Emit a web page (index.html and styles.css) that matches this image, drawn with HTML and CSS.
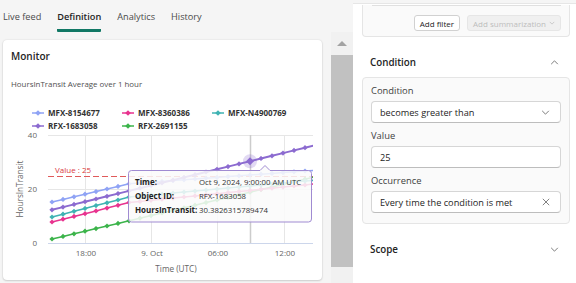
FILE: index.html
```html
<!DOCTYPE html>
<html lang="en">
<head>
    <meta charset="UTF-8">
    <title>Monitor definition</title>
    <link rel="stylesheet" href="styles.css">
</head>
<body>

<div class="app">
    <!-- Left: tabs and chart -->
    <div class="left">
        <nav class="tabs">
            <span class="tab">Live feed</span>
            <span class="tab active">Definition</span>
            <span class="tab">Analytics</span>
            <span class="tab">History</span>
        </nav>

        <section class="card">
            <h3 class="card-title">Monitor</h3>
            <p class="subtitle">HoursInTransit Average over 1 hour</p>

            <div class="legend">
                <span class="legend-item"><svg class="legend-mark" viewBox="0 0 12 6"><line x1="0" y1="3" x2="12" y2="3" stroke="#8fa3f5" stroke-width="1.5"/><path d="M6 0.2 L8.8 3 L6 5.8 L3.2 3Z" fill="#8fa3f5"/></svg>MFX-8154677</span>
                <span class="legend-item"><svg class="legend-mark" viewBox="0 0 12 6"><line x1="0" y1="3" x2="12" y2="3" stroke="#e8338f" stroke-width="1.5"/><path d="M6 0.2 L8.8 3 L6 5.8 L3.2 3Z" fill="#e8338f"/></svg>MFX-8360386</span>
                <span class="legend-item"><svg class="legend-mark" viewBox="0 0 12 6"><line x1="0" y1="3" x2="12" y2="3" stroke="#3fb3b3" stroke-width="1.5"/><path d="M6 0.2 L8.8 3 L6 5.8 L3.2 3Z" fill="#3fb3b3"/></svg>MFX-N4900769</span>
                <span class="legend-item"><svg class="legend-mark" viewBox="0 0 12 6"><line x1="0" y1="3" x2="12" y2="3" stroke="#8c6bd0" stroke-width="1.5"/><path d="M6 0.2 L8.8 3 L6 5.8 L3.2 3Z" fill="#8c6bd0"/></svg>RFX-1683058</span>
                <span class="legend-item"><svg class="legend-mark" viewBox="0 0 12 6"><line x1="0" y1="3" x2="12" y2="3" stroke="#3cb44b" stroke-width="1.5"/><path d="M6 0.2 L8.8 3 L6 5.8 L3.2 3Z" fill="#3cb44b"/></svg>RFX-2691155</span>
            </div>

            <svg class="chart" width="319" height="152" viewBox="3 128 319 152">
                <defs>
                    <clipPath id="plot"><rect x="48" y="128" width="265" height="118"/></clipPath>
                    <marker id="m-blue" viewBox="-3 -3 6 6" markerWidth="6" markerHeight="6" markerUnits="userSpaceOnUse"><path d="M0 -2.6 L2.6 0 L0 2.6 L-2.6 0Z" fill="#8fa3f5"/></marker>
                    <marker id="m-pink" viewBox="-3 -3 6 6" markerWidth="6" markerHeight="6" markerUnits="userSpaceOnUse"><path d="M0 -2.6 L2.6 0 L0 2.6 L-2.6 0Z" fill="#e8338f"/></marker>
                    <marker id="m-teal" viewBox="-3 -3 6 6" markerWidth="6" markerHeight="6" markerUnits="userSpaceOnUse"><path d="M0 -2.6 L2.6 0 L0 2.6 L-2.6 0Z" fill="#3fb3b3"/></marker>
                    <marker id="m-purple" viewBox="-3 -3 6 6" markerWidth="6" markerHeight="6" markerUnits="userSpaceOnUse"><path d="M0 -2.6 L2.6 0 L0 2.6 L-2.6 0Z" fill="#8c6bd0"/></marker>
                    <marker id="m-green" viewBox="-3 -3 6 6" markerWidth="6" markerHeight="6" markerUnits="userSpaceOnUse"><path d="M0 -2.6 L2.6 0 L0 2.6 L-2.6 0Z" fill="#3cb44b"/></marker>
                </defs>

                <!-- grid -->
                <g class="grid">
                    <line x1="48" y1="135.5" x2="313" y2="135.5"/>
                    <line x1="48" y1="189.5" x2="313" y2="189.5"/>
                    <line x1="85.5" y1="135" x2="85.5" y2="243"/>
                    <line x1="151.5" y1="135" x2="151.5" y2="243"/>
                    <line x1="217.5" y1="135" x2="217.5" y2="243"/>
                    <line x1="284.5" y1="135" x2="284.5" y2="243"/>
                </g>
                <line class="crosshair" x1="250.5" y1="135" x2="250.5" y2="243"/>
                <line class="axis" x1="48" y1="243.5" x2="313" y2="243.5"/>

                <!-- threshold -->
                <line class="threshold" x1="48" y1="176.5" x2="313" y2="176.5"/>
                <text class="threshold-label" x="55" y="173">Value : 25</text>

                <!-- series -->
                <g clip-path="url(#plot)" fill="none" stroke-width="1.5">
                    <polyline stroke="#3cb44b" marker-start="url(#m-green)" marker-mid="url(#m-green)" marker-end="url(#m-green)"
                        points="52,239 63,236.4 74,233.8 85,231.2 96,228.6 107,226 118,223.4 129,220.8 140,218.2 151,215.6 162,213 173,210.4 184,207.8 195,205.2 206,202.6 217,200 228,197.4 239,194.8 250,192.2 261,189.6 272,187 283,184.4 294,181.8 305,179.2 316,176.6"/>
                    <polyline stroke="#e8338f" marker-start="url(#m-pink)" marker-mid="url(#m-pink)" marker-end="url(#m-pink)"
                        points="52,222 63,219.2 74,216.4 85,213.7 96,210.9 107,208.1 118,205.3 129,202.5 140,201.4 151,200.3 162,199.2 173,198.1 184,197 195,195.9 206,194.8 217,193.7 228,192.6 239,191.5 250,190.4 261,189.3 272,188.2 283,187.1 294,186 305,184.9 316,183.8"/>
                    <polyline stroke="#3fb3b3" marker-start="url(#m-teal)" marker-mid="url(#m-teal)" marker-end="url(#m-teal)"
                        points="52,217 63,214.2 74,211.3 85,208.5 96,205.6 107,202.8 118,200 129,197.1 140,196.1 151,195.1 162,194.1 173,193.1 184,192.1 195,191.1 206,190.1 217,189.1 228,188.1 239,187.1 250,186.1 261,185.1 272,184.1 283,183.1 294,182.1 305,181.1 316,180.1"/>
                    <polyline stroke="#8fa3f5" marker-start="url(#m-blue)" marker-mid="url(#m-blue)" marker-end="url(#m-blue)"
                        points="52,202 63,199.4 74,196.8 85,194.2 96,191.6 107,189 118,186.4 129,183.8 140,183 151,182.2 162,181.4 173,180.6 184,179.8 195,179 206,178.2 217,177.4 228,176.6 239,175.8 250,175 261,174.2 272,173.4 283,172.6 294,171.8 305,171 316,170.2"/>
                    <polyline stroke="#8c6bd0" stroke-width="2" marker-start="url(#m-purple)" marker-mid="url(#m-purple)" marker-end="url(#m-purple)"
                        points="52,209.8 63,207.1 74,204.4 85,201.7 96,199 107,196.3 118,193.6 129,190.9 140,188.2 151,185.5 162,182.8 173,180.1 184,177.4 195,174.7 206,172 217,169.3 228,166.6 239,163.9 250,161.2 261,158.5 272,155.8 283,153.1 294,150.4 305,147.7 316,145"/>
                </g>
                <circle class="halo" cx="250" cy="161.2" r="7"/>
                <path d="M250 157.2 L254 161.2 L250 165.2 L246 161.2Z" fill="#8c6bd0"/>

                <!-- axis labels -->
                <g class="tick">
                    <text x="37" y="138" text-anchor="end">40</text>
                    <text x="37" y="192" text-anchor="end">20</text>
                    <text x="37" y="246" text-anchor="end">0</text>
                    <text x="86" y="256" text-anchor="middle">18:00</text>
                    <text x="152" y="256" text-anchor="middle">9. Oct</text>
                    <text x="218" y="256" text-anchor="middle">06:00</text>
                    <text x="285" y="256" text-anchor="middle">12:00</text>
                </g>
                <text class="axis-title" x="176" y="272" text-anchor="middle">Time (UTC)</text>
                <text class="axis-title" x="0" y="0" text-anchor="middle" transform="translate(23 189) rotate(-90)">HoursInTransit</text>

                <!-- tooltip -->
                <path class="tooltip" d="M131.5 170.5 H260 L265 165.5 L270 170.5 H308.5 A3 3 0 0 1 311.5 173.5 V219 A3 3 0 0 1 308.5 222 H131.5 A3 3 0 0 1 128.5 219 V173.5 A3 3 0 0 1 131.5 170.5Z"/>
                <g class="tip-text">
                    <text class="tip-key" x="135" y="185">Time:</text>
                    <text x="199" y="185">Oct 9, 2024, 9:00:00 AM UTC</text>
                    <text class="tip-key" x="135" y="199">Object ID:</text>
                    <text x="199" y="199">RFX-1683058</text>
                    <text class="tip-key" x="135" y="213">HoursInTransit:</text>
                    <text x="199" y="213">30.3826315789474</text>
                </g>
            </svg>
        </section>
    </div>

    <!-- Scrollbar -->
    <div class="scrollbar">
        <div class="scroll-arrow"></div>
        <div class="scroll-thumb"></div>
    </div>

    <!-- Right: settings -->
    <aside class="right">
        <div class="filter-card">
            <div class="divider"></div>
            <div class="filter-actions">
                <button class="btn">Add filter</button>
                <button class="btn" disabled>Add summarization <svg class="chev-sm" viewBox="0 0 8 5"><polyline points="1,1 4,4 7,1"/></svg></button>
            </div>
        </div>

        <div class="section-head">
            <span>Condition</span>
            <svg class="chev" viewBox="0 0 10 6"><polyline points="1,5 5,1 9,5"/></svg>
        </div>

        <div class="cond-card">
            <label class="field-label">Condition</label>
            <div class="field">
                <span>becomes greater than</span>
                <svg class="chev" viewBox="0 0 10 6"><polyline points="1,1 5,5 9,1"/></svg>
            </div>
            <label class="field-label">Value</label>
            <div class="field"><span>25</span></div>
            <label class="field-label">Occurrence</label>
            <div class="field">
                <span>Every time the condition is met</span>
                <svg class="close" viewBox="0 0 10 10"><path d="M1 1 L9 9 M9 1 L1 9"/></svg>
            </div>
        </div>

        <div class="section-head">
            <span>Scope</span>
            <svg class="chev" viewBox="0 0 10 6"><polyline points="1,1 5,5 9,1"/></svg>
        </div>

        <div class="section-head">
            <span>Action</span>
            <svg class="chev" viewBox="0 0 10 6"><polyline points="1,5 5,1 9,5"/></svg>
        </div>
    </aside>
</div>

</body>
</html>
```

FILE: styles.css
```css
* {
    margin: 0;
    padding: 0;
    box-sizing: border-box;
}

body {
    font-family: 'Open Sans', 'Noto Sans', sans-serif;
    background-color: #f5f5f5;
    color: #242424;
}

.app {
    display: flex;
    width: 576px;
    height: 283px;
    overflow: hidden;
}

/* Left column */
.left {
    width: 331px;
    flex-shrink: 0;
}

.tabs {
    display: flex;
    gap: 16px;
    height: 38px;
    padding: 10px 0 0 3px;
}

.tab {
    font-size: 9.2px;
    line-height: 14px;
    color: #4a4a4a;
    padding-bottom: 5px;
    border-bottom: 3px solid transparent;
    height: 22px;
}

.tab.active {
    font-weight: 600;
    color: #242424;
    border-bottom-color: #117865;
    border-radius: 1px;
}

.card {
    margin: 2px 0 0 3px;
    width: 319px;
    height: 240px;
    background-color: #fff;
    border-radius: 4px;
    box-shadow: 0 0 2px rgba(0, 0, 0, 0.12), 0 1px 2px rgba(0, 0, 0, 0.14);
    overflow: hidden;
}

.card-title {
    font-size: 10px;
    font-weight: 600;
    line-height: 14px;
    padding: 9px 0 0 8px;
    color: #242424;
}

.subtitle {
    font-size: 7.9px;
    line-height: 12px;
    color: #505050;
    margin: 15px 0 0 8px;
}

.legend {
    display: grid;
    grid-template-columns: repeat(3, 90px);
    margin-top: 16px;
    padding-left: 29px;
}

.legend-item {
    display: flex;
    align-items: center;
    gap: 4px;
    font-size: 8px;
    font-weight: 700;
    line-height: 13px;
    color: #333;
}

.legend-mark {
    width: 12px;
    height: 6px;
}

.chart {
    display: block;
    margin-top: -4px;
}

.grid line {
    stroke: #e6e6e6;
    stroke-width: 1;
}

.crosshair {
    stroke: #cccccc;
    stroke-width: 1.5;
}

.axis {
    stroke: #ccd6eb;
    stroke-width: 1;
}

.threshold {
    stroke: #e05a5a;
    stroke-width: 1;
    stroke-dasharray: 6 3;
}

.threshold-label {
    font-size: 8px;
    fill: #d9383c;
}

.halo {
    fill: #8c6bd0;
    fill-opacity: 0.25;
}

.tick text {
    font-size: 8px;
    fill: #666;
}

.axis-title {
    font-size: 8.2px;
    fill: #666;
}

.tooltip {
    fill: rgba(250, 250, 250, 0.86);
    stroke: #a08bd2;
    stroke-width: 1;
}

.tip-text text {
    font-size: 7.8px;
    fill: #333;
}

.tip-text .tip-key {
    font-size: 8px;
    font-weight: 700;
    fill: #222;
}

/* Scrollbar */
.scrollbar {
    width: 22px;
    flex-shrink: 0;
    margin-top: 32px;
    background-color: #f1f1f1;
    display: flex;
    flex-direction: column;
    align-items: center;
}

.scroll-arrow {
    margin-top: 9px;
    border-left: 5px solid transparent;
    border-right: 5px solid transparent;
    border-bottom: 5px solid #a3a3a3;
}

.scroll-thumb {
    margin-top: 9px;
    width: 100%;
    height: 212px;
    background-color: #c1c1c1;
}

/* Right column */
.right {
    flex: 1;
    margin-top: 3px;
    border-top: 1px solid #e6e6e6;
    background-color: #fff;
    padding: 0 6px 0 9px;
}

.filter-card {
    border: 1px solid #e5e5e5;
    border-top: none;
    border-radius: 0 0 4px 4px;
    background-color: #fafafa;
    padding: 0 8px 5px 9px;
}

.divider {
    height: 1px;
    background-color: #e0e0e0;
    margin-top: 1px;
}

.filter-actions {
    display: flex;
    justify-content: flex-end;
    gap: 7px;
    margin-top: 9px;
}

.btn {
    font-family: inherit;
    font-size: 8px;
    height: 16px;
    padding: 0 5px;
    border: 1px solid #d1d1d1;
    border-radius: 3px;
    background-color: #fff;
    color: #242424;
    display: flex;
    align-items: center;
    gap: 3px;
}

.btn:disabled {
    background-color: #f0f0f0;
    border-color: #e6e6e6;
    color: #bdbdbd;
}

.chev-sm {
    width: 6px;
    height: 4px;
    fill: none;
    stroke: #bdbdbd;
    stroke-width: 1;
}

.section-head {
    display: flex;
    justify-content: space-between;
    align-items: center;
    height: 30px;
    margin-top: 10px;
    padding: 0 11px 0 8px;
    font-size: 9.8px;
    font-weight: 600;
}

.chev {
    width: 9px;
    height: 5px;
    fill: none;
    stroke: #616161;
    stroke-width: 1;
}

.cond-card {
    border: 1px solid #e5e5e5;
    border-radius: 4px;
    background-color: #fafafa;
    padding: 6px 8px 10px;
}

.field-label {
    display: block;
    font-size: 9.4px;
    line-height: 14px;
    color: #424242;
    margin-top: 6px;
}

.field-label:first-child {
    margin-top: 0;
}

.field {
    margin-top: 3px;
    height: 22px;
    display: flex;
    align-items: center;
    justify-content: space-between;
    padding: 0 10px 0 8px;
    background-color: #fff;
    border: 1px solid #d6d6d6;
    border-bottom-color: #bdbdbd;
    border-radius: 4px;
    font-size: 9.2px;
    color: #242424;
}

.close {
    width: 8px;
    height: 8px;
    fill: none;
    stroke: #616161;
    stroke-width: 1;
}
```
